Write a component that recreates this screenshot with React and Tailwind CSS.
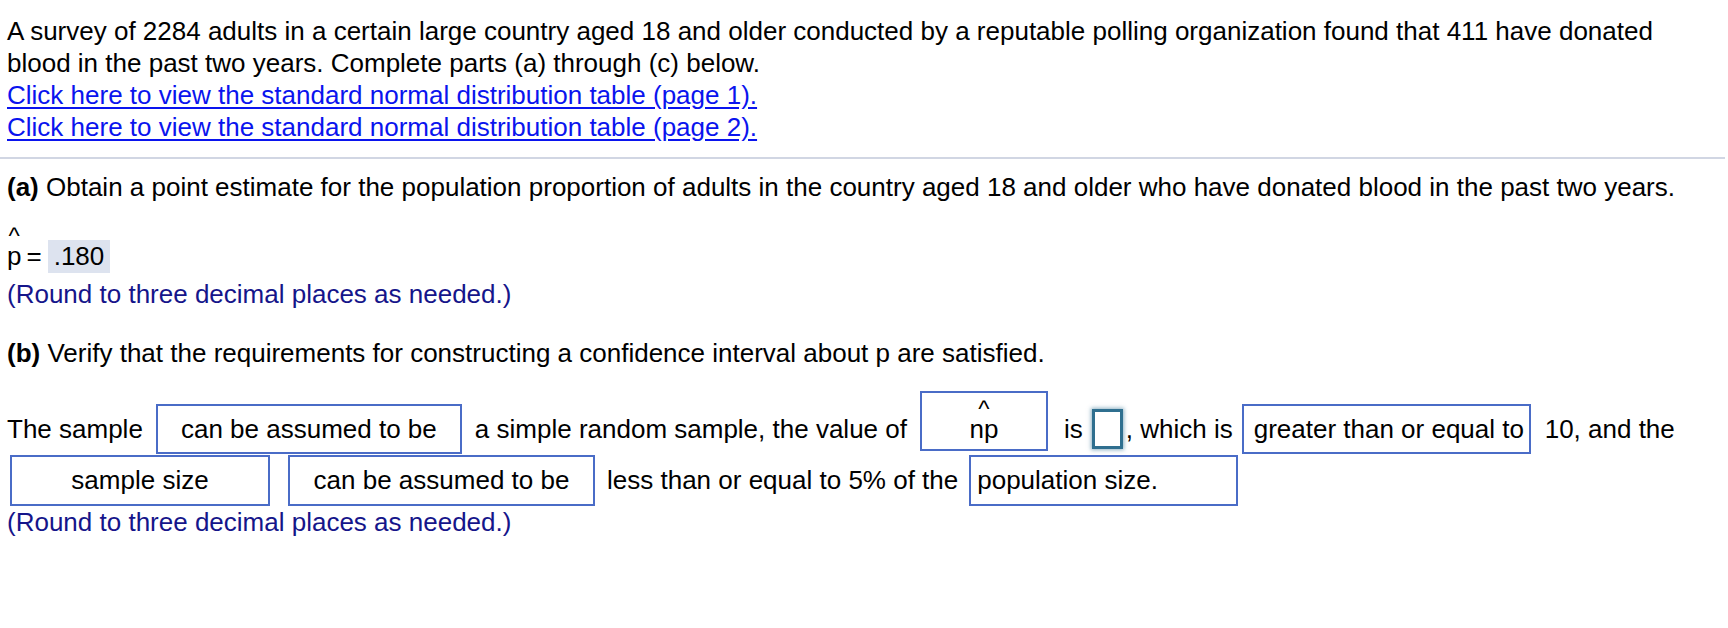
const blueBox = "border-2 border-[#4a6cc7] flex items-center";

const Hat = ({ children }) => (
  <span className="relative inline-block">
    <span className="absolute left-1/2 -translate-x-1/2 top-[-13px] text-[24px] leading-none">^</span>
    {children}
  </span>
);

const RoundNote = () => (
  <p className="text-[#15158a] leading-[32px]">(Round to three decimal places as needed.)</p>
);

export default function App() {
  return (
    <div
      className="w-[1728px] h-[628px] bg-white text-black text-[26px] pl-[7px] pt-[15px]"
      style={{ fontFamily: '"Liberation Sans", Arial, sans-serif' }}
    >
      <div className="leading-[32px]">
        <p>
          A survey of 2284 adults in a certain large country aged 18 and older conducted by a reputable polling organization found that 411 have donated
          <br />
          blood in the past two years. Complete parts (a) through (c) below.
        </p>
        <p>
          <a href="#" className="text-[#0a14ee] underline underline-offset-[3px]">
            Click here to view the standard normal distribution table (page 1).
          </a>
        </p>
        <p>
          <a href="#" className="text-[#0a14ee] underline underline-offset-[3px]">
            Click here to view the standard normal distribution table (page 2).
          </a>
        </p>
      </div>

      <div className="-ml-[7px] mt-[14px] h-[2px] w-[1725px] bg-[#d1d6e3]" />

      {/* part a */}
      <p className="mt-[12px] leading-[32px]">
        <span className="font-bold">(a)</span> Obtain a point estimate for the population proportion of adults in the country aged 18 and older who have donated blood in the past two years.
      </p>

      <div className="mt-[37px] flex items-center h-[33px]">
        <Hat>p</Hat>
        <span className="ml-[5px]">=</span>
        <span className="ml-[6px] h-[33px] px-[6px] bg-[#dde3ef] flex items-center">.180</span>
      </div>
      <div className="mt-[5px]">
        <RoundNote />
      </div>

      {/* part b */}
      <p className="mt-[27px] leading-[32px]">
        <span className="font-bold">(b)</span> Verify that the requirements for constructing a confidence interval about p are satisfied.
      </p>

      <div className="mt-[22px] flex items-end h-[63px] whitespace-nowrap">
        <span className="leading-[50px]">The sample</span>
        <div className={`${blueBox} h-[50px] ml-[13px] w-[306px] justify-center`}>can be assumed to be</div>
        <span className="leading-[50px] ml-[13px]">a simple random sample, the value of</span>
        <div className={`${blueBox} h-[60px] mb-[3px] ml-[13px] w-[128px] justify-center pt-[16px]`}>
          <Hat>np</Hat>
        </div>
        <span className="leading-[50px] ml-[16px]">is</span>
        <div className="h-[40px] w-[31px] mb-[5px] ml-[9px] border-[3px] border-[#2f6f8f] shadow-[0_0_4px_1px_rgba(47,111,143,0.55)]" />
        <span className="leading-[50px] ml-[3px]">, which is</span>
        <div className={`${blueBox} h-[50px] ml-[9px] w-[289px] pl-[10px]`}>greater than or equal to</div>
        <span className="leading-[50px] ml-[14px]">10, and the</span>
      </div>

      <div className="mt-[1px] flex items-center h-[51px] whitespace-nowrap">
        <div className={`${blueBox} h-[51px] ml-[3px] w-[260px] justify-center`}>sample size</div>
        <div className={`${blueBox} h-[51px] ml-[18px] w-[307px] justify-center`}>can be assumed to be</div>
        <span className="ml-[12px]">less than or equal to 5% of the</span>
        <div className={`${blueBox} h-[51px] ml-[11px] w-[269px] pl-[6px]`}>population size.</div>
      </div>
      <RoundNote />
    </div>
  );
}
